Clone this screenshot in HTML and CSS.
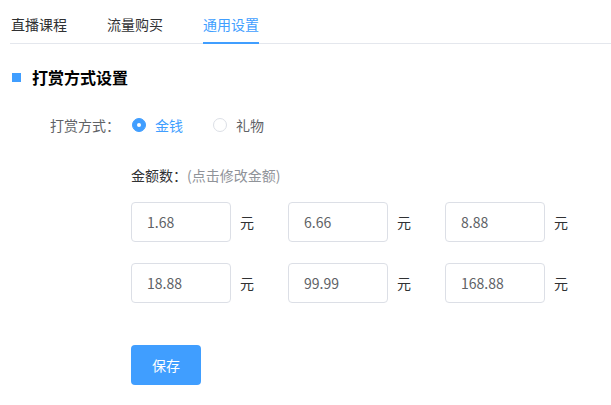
FILE: index.html
```html
<!DOCTYPE html>
<html lang="zh-CN">
<head>
    <meta charset="UTF-8">
    <meta name="viewport" content="width=device-width, initial-scale=1.0">
    <title>通用设置</title>
    <link rel="stylesheet" href="styles.css">
</head>
<body>
    <div class="tabs">
        <div class="tab">直播课程</div>
        <div class="tab">流量购买</div>
        <div class="tab active">通用设置</div>
    </div>

    <div class="section-title"><span class="mark"></span>打赏方式设置</div>

    <div class="form-row">
        <label class="form-label">打赏方式：</label>
        <label class="radio checked"><span class="radio-dot"></span>金钱</label>
        <label class="radio"><span class="radio-dot"></span>礼物</label>
    </div>

    <div class="amount-box">
        <div class="amount-title">金额数：<span class="hint">(点击修改金额)</span></div>
        <div class="amount-grid">
            <div class="amount-item"><input type="text" value="1.68"><span>元</span></div>
            <div class="amount-item"><input type="text" value="6.66"><span>元</span></div>
            <div class="amount-item"><input type="text" value="8.88"><span>元</span></div>
            <div class="amount-item"><input type="text" value="18.88"><span>元</span></div>
            <div class="amount-item"><input type="text" value="99.99"><span>元</span></div>
            <div class="amount-item"><input type="text" value="168.88"><span>元</span></div>
        </div>
        <button class="btn-save">保存</button>
    </div>
</body>
</html>
```

FILE: styles.css
```css
body {
    margin: 0;
    font-family: "Noto Sans CJK SC", "Noto Sans", sans-serif;
    font-size: 14px;
    color: #303133;
    background-color: #fff;
}
.tabs {
    display: flex;
    gap: 40px;
    margin-left: 10px;
    padding-left: 1px;
    border-bottom: 1px solid #e4e7ed;
}
.tab {
    padding-top: 6px;
    line-height: 36px;
    border-bottom: 2px solid transparent;
    margin-bottom: -1px;
    color: #303133;
}
.tab.active {
    color: #409eff;
    border-bottom-color: #409eff;
}
.section-title {
    display: flex;
    align-items: center;
    margin-top: 21px;
    line-height: 24px;
    font-size: 16px;
    font-weight: bold;
    color: #000;
}
.section-title .mark {
    width: 9px;
    height: 9px;
    background-color: #409eff;
    margin-left: 12px;
    margin-right: 11px;
}
.form-row {
    display: flex;
    align-items: center;
    height: 40px;
    margin-top: 16px;
}
.form-label {
    width: 120px;
    padding-right: 12px;
    text-align: right;
    color: #606266;
}
.radio {
    display: flex;
    align-items: center;
    color: #606266;
    margin-right: 30px;
}
.radio-dot {
    width: 12px;
    height: 12px;
    border: 1px solid #dcdfe6;
    border-radius: 50%;
    margin-right: 9px;
    position: relative;
}
.radio.checked {
    color: #409eff;
}
.radio.checked .radio-dot {
    background-color: #409eff;
    border-color: #409eff;
}
.radio.checked .radio-dot::after {
    content: "";
    position: absolute;
    width: 4px;
    height: 4px;
    border-radius: 50%;
    background-color: #fff;
    left: 4px;
    top: 4px;
}
.amount-box {
    margin-left: 131px;
    margin-top: 20px;
}
.amount-title {
    line-height: 20px;
    color: #303133;
}
.amount-title .hint {
    color: #909399;
}
.amount-grid {
    display: grid;
    grid-template-columns: 157px 157px auto;
    row-gap: 21px;
    margin-top: 17px;
}
.amount-item {
    display: flex;
    align-items: center;
}
.amount-item input {
    width: 100px;
    height: 40px;
    box-sizing: border-box;
    padding: 0 15px;
    border: 1px solid #dcdfe6;
    border-radius: 4px;
    font-family: inherit;
    font-size: 14px;
    color: #606266;
    outline: none;
}
.amount-item span {
    margin-left: 9px;
    color: #303133;
}
.btn-save {
    display: block;
    margin-top: 42px;
    width: 70px;
    height: 40px;
    border: none;
    border-radius: 4px;
    background-color: #409eff;
    color: #fff;
    font-family: inherit;
    font-size: 14px;
    cursor: pointer;
}
```
